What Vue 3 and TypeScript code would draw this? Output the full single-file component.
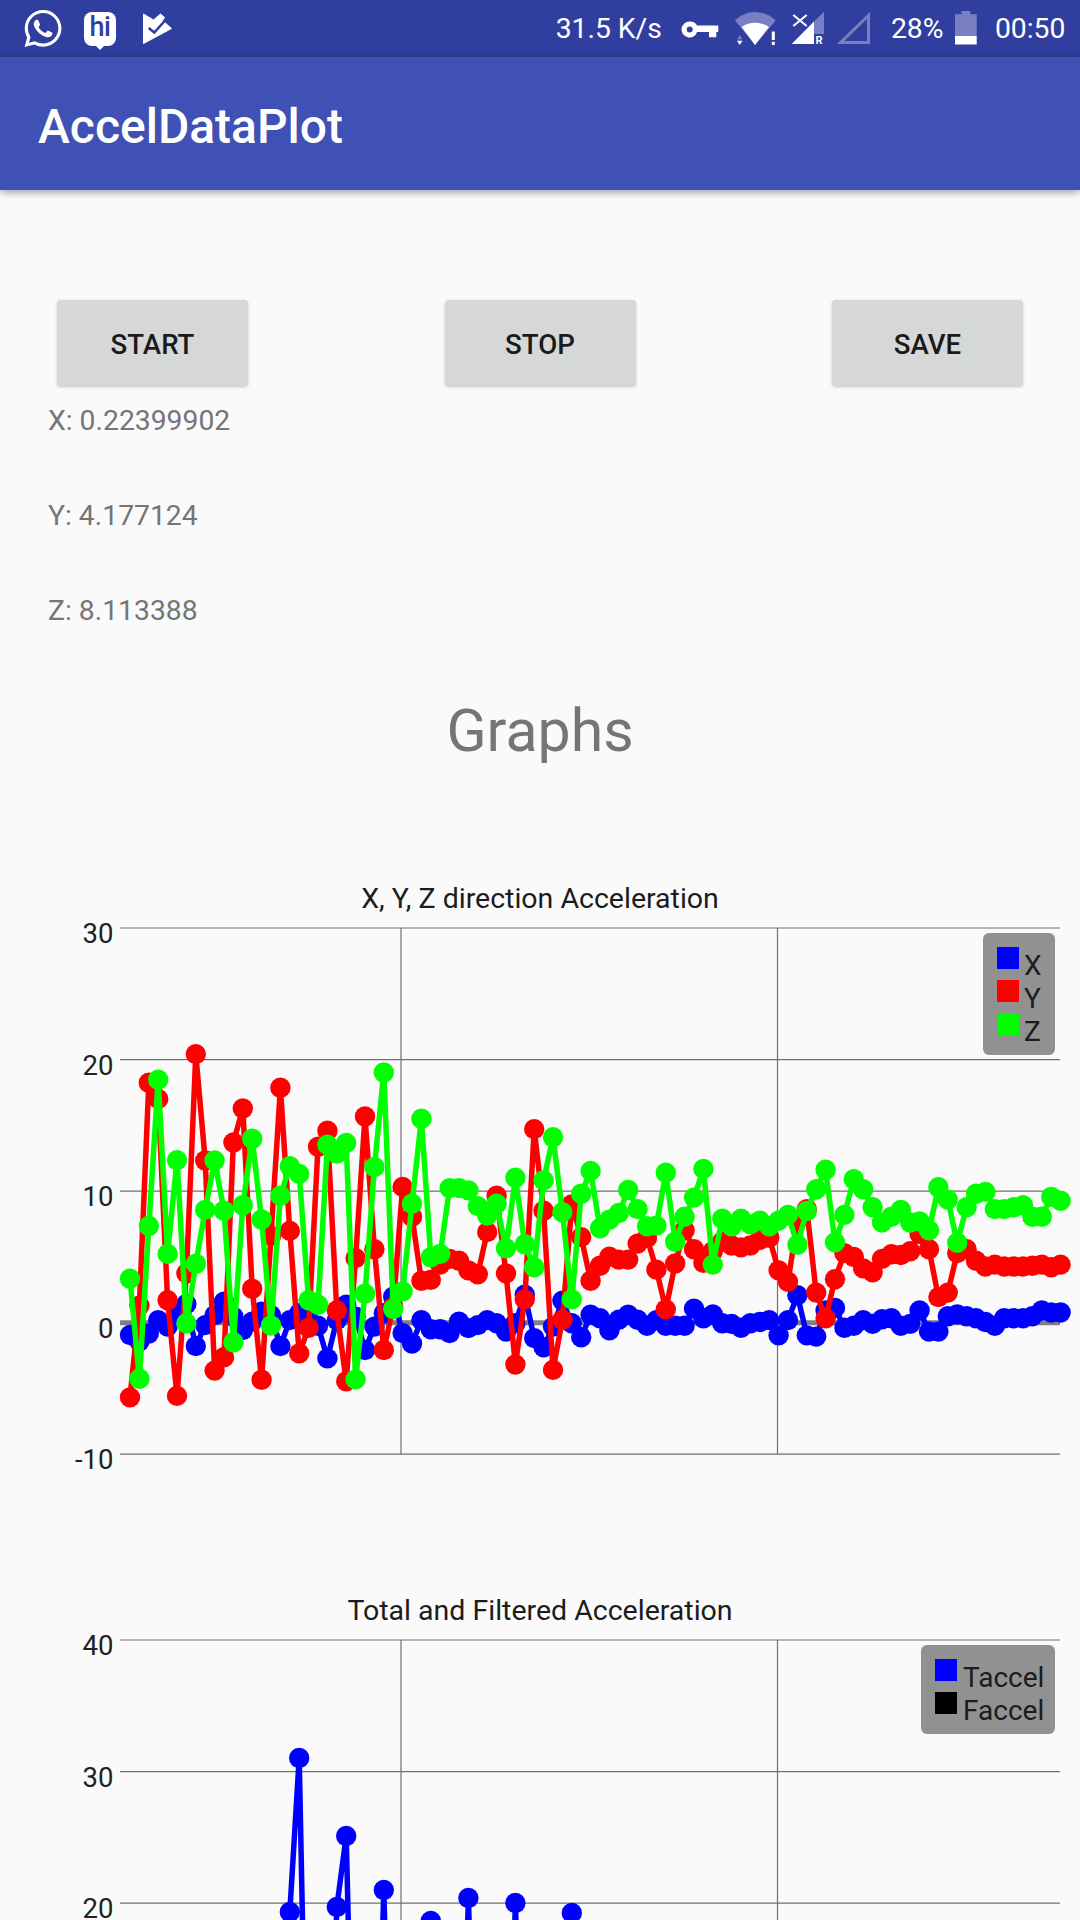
<script setup lang="ts">
import { computed } from 'vue'

interface Series { color: string; points: string; dots: { x: number; y: number }[] }
interface Chart {
  title: string
  lines: { y: number; label: string; zero?: boolean }[]
  series: Series[]
  legend: { label: string; color: string }[]
  legendX: number
  legendW: number
  legendH: number
  textGap: number
}

const PLOT_TOP = 58
const STEP = 131.55
const ROW = 33

const blue = [1189,1206,1185,1150,1167,1128,1108,1218,1163,1137,1102,1141,1176,1154,1128,1137,1218,1150,1132,1150,1165,1250,1150,1110,1141,1228,1167,1132,1089,1184,1211,1150,1174,1174,1184,1154,1171,1163,1150,1158,1180,1158,1084,1197,1221,1167,1099,1158,1195,1136,1145,1177,1149,1136,1149,1165,1150,1165,1165,1165,1120,1145,1135,1158,1160,1170,1158,1155,1150,1190,1150,1085,1190,1193,1125,1118,1170,1165,1150,1160,1148,1145,1165,1160,1125,1180,1180,1140,1135,1140,1145,1155,1165,1145,1145,1145,1140,1125,1130,1130]
const red = [1352,1112,530,572,1098,1348,1028,455,733,1282,1247,686,597,1068,1306,930,543,917,1237,1170,697,655,1125,1310,988,618,965,1228,1115,802,880,1047,1045,1005,990,995,1020,1030,920,825,1028,1266,1096,651,864,1280,1149,848,933,1047,1008,984,992,992,950,935,1018,1122,1002,915,965,1000,970,945,955,960,955,940,935,1020,1050,890,860,1078,1145,1043,975,985,1015,1025,990,978,980,970,925,965,1090,1078,975,965,995,1010,1005,1010,1010,1010,1008,1005,1012,1005]
const green = [1042,1303,904,522,977,732,1158,1003,862,733,864,1208,850,676,887,1164,825,748,768,1098,1110,692,715,687,1305,1081,750,503,1121,1075,846,624,986,977,805,805,811,852,877,846,962,778,952,1012,785,672,868,1096,820,760,910,888,870,810,860,905,903,765,945,880,830,755,1005,885,905,885,900,890,905,890,875,953,865,808,757,947,875,782,808,855,895,880,862,895,892,915,803,835,948,855,820,815,860,860,855,850,880,880,828,838]

const xOf = (i: number): number => 130 + 9.4 * i

function toSeries(color: string, ys: number[]): Series {
  const dots = ys.map((y, i) => ({ x: xOf(i), y }))
  return { color, dots, points: dots.map((d) => `${d.x},${d.y}`).join(' ') }
}

// Readings were taken from a 2.613x vertical crop that began 10px above the chart box.
const fromCrop = (ys: number[]): number[] => ys.map((v) => +(v / 2.613 + 10).toFixed(1))

const peaks: Record<number, number> = { 17: 330, 18: 176, 22: 325, 23: 254, 27: 308, 32: 339, 36: 316, 41: 321, 47: 331 }
const total = Array.from({ length: 60 }, (_, i) => peaks[i] ?? 640)

const charts = computed<Chart[]>(() => [
  {
    title: 'X, Y, Z direction Acceleration',
    lines: ['30', '20', '10', '0', '-10'].map((label, i) => ({
      y: PLOT_TOP + STEP * i,
      label,
      zero: label === '0',
    })),
    series: [
      toSeries('#0000ff', fromCrop(blue)),
      toSeries('#ff0000', fromCrop(red)),
      toSeries('#00ff00', fromCrop(green)),
    ],
    legend: [
      { label: 'X', color: '#0000ff' },
      { label: 'Y', color: '#ff0000' },
      { label: 'Z', color: '#00ff00' },
    ],
    legendX: 983,
    legendW: 72,
    legendH: 122,
    textGap: 41,
  },
  {
    title: 'Total and Filtered Acceleration',
    lines: ['40', '30', '20'].map((label, i) => ({ y: PLOT_TOP + STEP * i, label })),
    series: [toSeries('#0000ff', total)],
    legend: [
      { label: 'Taccel', color: '#0000ff' },
      { label: 'Faccel', color: '#000000' },
    ],
    legendX: 921,
    legendW: 134,
    legendH: 89,
    textGap: 42,
  },
])

const readings = ['X: 0.22399902', 'Y: 4.177124', 'Z: 8.113388']
const buttons = ['START', 'STOP', 'SAVE']
</script>

<template>
  <div class="screen">
    <header class="status">
      <svg class="wa" viewBox="0 0 24 24" width="38" height="37">
        <path fill="#fff" d="M17.472 14.382c-.297-.149-1.758-.867-2.03-.967-.273-.099-.471-.148-.67.15-.197.297-.767.966-.94 1.164-.173.199-.347.223-.644.075-.297-.15-1.255-.463-2.39-1.475-.883-.788-1.48-1.761-1.653-2.059-.173-.297-.018-.458.13-.606.134-.133.298-.347.446-.52.149-.174.198-.298.298-.497.099-.198.05-.371-.025-.52-.075-.149-.669-1.612-.916-2.207-.242-.579-.487-.5-.669-.51-.173-.008-.371-.01-.57-.01-.198 0-.52.074-.792.372-.272.297-1.04 1.016-1.04 2.479 0 1.462 1.065 2.875 1.213 3.074.149.198 2.096 3.2 5.077 4.487.709.306 1.262.489 1.694.625.712.227 1.36.195 1.871.118.571-.085 1.758-.719 2.006-1.413.248-.694.248-1.289.173-1.413-.074-.124-.272-.198-.57-.347m-5.421 7.403h-.004a9.87 9.87 0 01-5.031-1.378l-.361-.214-3.741.982.998-3.648-.235-.374a9.86 9.86 0 01-1.51-5.26c.001-5.45 4.436-9.884 9.888-9.884 2.64 0 5.122 1.03 6.988 2.898a9.825 9.825 0 012.893 6.994c-.003 5.45-4.437 9.884-9.885 9.884m8.413-18.297A11.815 11.815 0 0012.05 0C5.495 0 .16 5.335.157 11.892c0 2.096.547 4.142 1.588 5.945L.057 24l6.305-1.654a11.882 11.882 0 005.683 1.448h.005c6.554 0 11.89-5.335 11.893-11.893a11.821 11.821 0 00-3.48-8.413z" />
      </svg>
      <div class="hi">
        <span class="hi-text">hi</span>
      </div>
      <svg class="tick" viewBox="143 12 30 33" width="30" height="33">
        <path fill="#fff" stroke="#fff" stroke-width="1" stroke-linejoin="round" d="M143.5 14 153.5 20 160.5 14 164.5 17.5 162.5 20.5 171.5 28.5 143.5 43.5Z" />
        <path fill="none" stroke="#303f9f" stroke-width="2.6" d="M148.7 28 154.3 32.5 165.5 20" />
      </svg>

      <div class="status-right">
        <span class="st speed">31.5 K/s</span>
        <svg class="i-key" viewBox="682 0 38 57" width="38" height="57">
          <path fill="#fff" fill-rule="evenodd" d="M690.7 21.5a8 8 0 0 1 7.4 4h21.2V32h-2v5.3h-7.3V32h-11.9a8 8 0 1 1-7.4-10.5Zm0 5a3 3 0 1 0 0 6 3 3 0 0 0 0-6Z" />
        </svg>
        <svg class="i-wifi" viewBox="736 0 42 57" width="42" height="57">
          <path fill="#7880c3" d="M756 45 736 20.5C748 9 764 9 776.7 20.5Z" />
          <path fill="#fff" d="M756 45 742.7 27c8-5.6 19-5.6 27.3 0Z" />
          <path fill="#7880c3" d="M740.7 35l2.8 4.2h-5.6Z" />
          <path fill="#fff" d="M740.7 45l2.8-4.2h-5.6Z" />
          <path fill="#fff" d="M772.8 31.5h3v8.5h-3Zm0 10.2h3V45h-3Z" />
        </svg>
        <svg class="i-sim" viewBox="791 0 34 57" width="34" height="57">
          <path fill="#7880c3" d="M824 11.7V34h-10V21.6Z" />
          <path fill="#fff" d="M791.7 44 814 21.6V44Z" />
          <path fill="none" stroke="#fff" stroke-width="2" d="M793.3 15l13.4 11M806.7 15l-13.4 11" />
          <text class="r-mark" x="815.5" y="44">R</text>
        </svg>
        <svg class="i-signal" viewBox="836 0 35 57" width="35" height="57">
          <path fill="none" stroke="#7880c3" stroke-width="3" d="M840.5 42.5 868.5 15.5V42.5Z" />
        </svg>
        <span class="st pct">28%</span>
        <svg class="i-batt" viewBox="955 0 22 57" width="22" height="57">
          <path fill="#7880c3" d="M961.5 11h8.8v3.2h6.4V36H955V14.2h6.5Z" />
          <rect x="955" y="36" width="21.7" height="8.5" fill="#fff" />
        </svg>
        <span class="st clock">00:50</span>
      </div>
    </header>

    <div class="toolbar">AccelDataPlot</div>

    <div class="buttons">
      <button v-for="b in buttons" :key="b" class="btn" type="button">{{ b }}</button>
    </div>

    <div class="readings">
      <p v-for="r in readings" :key="r" class="reading">{{ r }}</p>
    </div>

    <h1 class="graphs">Graphs</h1>

    <section v-for="chart in charts" :key="chart.title" class="chart">
      <svg class="chart-svg" viewBox="0 0 1080 620" width="1080" height="620">
        <text class="title" x="540" y="38">{{ chart.title }}</text>

        <line x1="401" x2="401" :y1="PLOT_TOP" :y2="PLOT_TOP + STEP * 4" class="grid" />
        <line x1="777.5" x2="777.5" :y1="PLOT_TOP" :y2="PLOT_TOP + STEP * 4" class="grid" />
        <g v-for="l in chart.lines" :key="l.label">
          <line x1="120" x2="1060" :y1="l.y" :y2="l.y" :class="l.zero ? 'zero' : 'grid'" />
          <text class="tick-label" x="113.5" :y="l.y + 15">{{ l.label }}</text>
        </g>

        <g v-for="s in chart.series" :key="s.color">
          <polyline :points="s.points" fill="none" :stroke="s.color" stroke-width="5.5" stroke-linejoin="round" />
          <circle v-for="(d, i) in s.dots" :key="i" :cx="d.x" :cy="d.y" r="10.2" :fill="s.color" />
        </g>

        <rect :x="chart.legendX" y="63" :width="chart.legendW" :height="chart.legendH" rx="6" fill="#919191" />
        <g v-for="(item, i) in chart.legend" :key="item.label">
          <rect :x="chart.legendX + 14" :y="77 + i * ROW" width="22" height="22" :fill="item.color" />
          <text class="legend-text" :x="chart.legendX + chart.textGap" :y="105 + i * ROW">{{ item.label }}</text>
        </g>
      </svg>
    </section>
  </div>
</template>

<style scoped>
.screen {
  width: 1080px;
  height: 1920px;
  overflow: hidden;
  background: #fafafa;
  font-family: Roboto, "Liberation Sans", sans-serif;
}
.status {
  height: 57px;
  background: #303f9f;
  display: flex;
  align-items: center;
  padding: 0 14.6px 0 24px;
  box-sizing: border-box;
}
.hi {
  width: 32px;
  height: 34px;
  margin-left: 22px;
  background: #fff;
  border-radius: 8px;
  position: relative;
  display: flex;
  align-items: center;
  justify-content: center;
}
.hi::after {
  content: "";
  position: absolute;
  left: 11px;
  bottom: -4px;
  border-left: 5px solid transparent;
  border-right: 5px solid transparent;
  border-top: 5px solid #fff;
}
.hi-text {
  color: #303f9f;
  font-size: 27px;
  font-weight: 500;
  letter-spacing: -0.5px;
  line-height: 1;
  margin-top: -2px;
}
.tick {
  margin-left: 27px;
}
.status-right {
  margin-left: auto;
  display: flex;
  align-items: center;
}
.st {
  color: #fff;
  font-size: 28.3px;
  line-height: 57px;
}
.i-key { margin-left: 19px; }
.i-wifi { margin-left: 16px; }
.i-sim { margin-left: 14px; }
.i-signal { margin-left: 11px; }
.pct { margin-left: 20px; }
.i-batt { margin-left: 12px; }
.clock { margin-left: 17.5px; }
.r-mark {
  fill: #fff;
  font-size: 11px;
  font-weight: 700;
}
.toolbar {
  height: 133px;
  box-sizing: border-box;
  padding-left: 38px;
  line-height: 140px;
  background: #3f51b5;
  color: #fff;
  font-size: 48px;
  font-weight: 500;
  box-shadow: 0 2px 8px rgba(0, 0, 0, 0.4);
  position: relative;
}
.buttons {
  display: flex;
  justify-content: space-between;
  padding: 110px 57px 0;
}
.btn {
  width: 191px;
  height: 86px;
  border: 0;
  padding: 2px 0 0;
  border-radius: 4px;
  background: #d6d7d7;
  color: #1a1a1a;
  font-family: inherit;
  font-size: 27.6px;
  font-weight: 500;
  box-shadow: 0 1px 3px rgba(0, 0, 0, 0.22);
}
.readings {
  margin-top: 17.5px;
  padding-left: 48px;
  display: flex;
  flex-direction: column;
  gap: 62px;
}
.reading {
  margin: 0;
  font-size: 28.3px;
  line-height: 33px;
  color: #757575;
}
.graphs {
  margin: 69px 0 0;
  text-align: center;
  font-size: 59px;
  line-height: 70px;
  font-weight: 400;
  color: #757575;
}
.chart {
  margin-top: 104px;
  height: 608px;
}
.chart-svg {
  display: block;
  overflow: visible;
}
.title {
  font-size: 28.5px;
  fill: #1c1c1c;
  text-anchor: middle;
}
.tick-label {
  font-size: 27.5px;
  fill: #222;
  text-anchor: end;
}
.legend-text {
  font-size: 28px;
  fill: #1c1c1c;
}
.grid {
  stroke: #707070;
  stroke-width: 1.2;
}
.zero {
  stroke: #808080;
  stroke-width: 5;
}
</style>

<style>
html, body {
  margin: 0;
  background: #fafafa;
}
</style>
